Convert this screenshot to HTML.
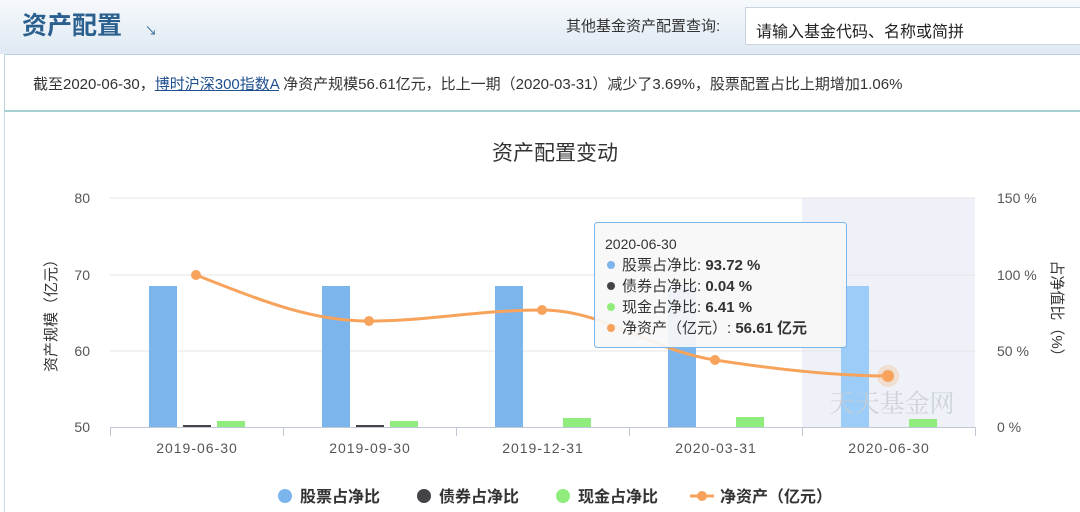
<!DOCTYPE html>
<html><head><meta charset="utf-8"><style>
body{margin:0;width:1080px;height:511px;overflow:hidden;background:#fff;font-family:"Liberation Sans","Noto Sans CJK SC",sans-serif;}
.hdr{position:absolute;left:0;top:0;width:1080px;height:54px;background:linear-gradient(#f6f9fc,#dfe9f3);}
.t{position:absolute;left:22px;top:6px;font-size:25px;font-weight:bold;color:#2a5f8e;}
.ar{position:absolute;left:145px;top:22px;font-size:12px;color:#2a5f8e;}
.q{position:absolute;left:566px;top:15px;font-size:15px;color:#333;}
.inp{position:absolute;left:745px;top:7px;width:340px;height:38px;background:#fff;border:1px solid #c9d3dd;box-sizing:border-box;font-size:16px;color:#222;padding:10px 0 0 10px;}
.info{position:absolute;left:4px;top:54px;width:1080px;height:58px;border:1px solid #bcd1e0;border-bottom:2px solid #a9d0d0;box-sizing:border-box;font-size:15px;color:#333;padding:18px 0 0 28px;}
.info a{color:#1f4f8f;text-decoration:underline;}
.side{position:absolute;left:4px;top:112px;width:1px;height:400px;background:#cdd8e2;}
</style></head><body>
<div class="hdr"></div>
<div class="t">资产配置</div><div class="ar">↘</div>
<div class="q">其他基金资产配置查询:</div>
<div class="inp">请输入基金代码、名称或简拼</div>
<div class="info">截至2020-06-30，<a>博时沪深300指数A</a> 净资产规模56.61亿元，比上一期（2020-03-31）减少了3.69%，股票配置占比上期增加1.06%</div>
<div class="side"></div>
<svg style="position:absolute;left:0;top:0" width="1080" height="511" font-family="Liberation Sans, Noto Sans CJK SC, sans-serif">
<rect x="802" y="198" width="173" height="229" fill="#eef2f8"/>
<text x="555" y="160" font-size="21" fill="#333" text-anchor="middle">资产配置变动</text>
<g stroke="#e4e4e4"><line x1="110" y1="198" x2="975" y2="198"/><line x1="110" y1="275" x2="975" y2="275"/><line x1="110" y1="351" x2="975" y2="351"/></g>
<line x1="110" y1="427.5" x2="975" y2="427.5" stroke="#c0c8d6"/>
<g stroke="#c0c8d6"><line x1="110.5" y1="427" x2="110.5" y2="436"/><line x1="283.5" y1="427" x2="283.5" y2="436"/><line x1="456.5" y1="427" x2="456.5" y2="436"/><line x1="629.5" y1="427" x2="629.5" y2="436"/><line x1="802.5" y1="427" x2="802.5" y2="436"/><line x1="975.5" y1="427" x2="975.5" y2="436"/></g>
<g font-size="14" fill="#555" text-anchor="end"><text x="90" y="203">80</text><text x="90" y="280">70</text><text x="90" y="356">60</text><text x="90" y="432">50</text></g>
<g font-size="14" fill="#555"><text x="997" y="203">150 %</text><text x="997" y="280">100 %</text><text x="997" y="356">50 %</text><text x="997" y="432">0 %</text></g>
<text transform="translate(56,312) rotate(-90)" font-size="15" fill="#333" text-anchor="middle">资产规模（亿元）</text>
<text transform="translate(1052,312) rotate(90)" font-size="15" fill="#333" text-anchor="middle">占净值比（%）</text>
<g font-size="14" fill="#555" text-anchor="middle" letter-spacing="1"><text x="197" y="453">2019-06-30</text><text x="370" y="453">2019-09-30</text><text x="543" y="453">2019-12-31</text><text x="716" y="453">2020-03-31</text><text x="889" y="453">2020-06-30</text></g>
<g fill="#7cb5ec"><rect x="149" y="286" width="28" height="141"/><rect x="322" y="286" width="28" height="141"/><rect x="495" y="286" width="28" height="141"/><rect x="668" y="286" width="28" height="141"/><rect x="841" y="286" width="28" height="141" fill="#9ccdf8"/></g>
<g fill="#434348"><rect x="183" y="425" width="28" height="2"/><rect x="356" y="425" width="28" height="2"/></g>
<g fill="#90ed7d"><rect x="217" y="421" width="28" height="6"/><rect x="390" y="421" width="28" height="6"/><rect x="563" y="418" width="28" height="9"/><rect x="736" y="417" width="28" height="10"/><rect x="909" y="419" width="28" height="8"/></g>
<path d="M196 275 C260 300,310 321,369 321 S480 310,542 310 S650 350,715 360 S840 376,888 376" fill="none" stroke="#f7a35c" stroke-width="3"/>
<g fill="#f7a35c"><circle cx="196" cy="275" r="5"/><circle cx="369" cy="321" r="5"/><circle cx="542" cy="310" r="5"/><circle cx="715" cy="360" r="5"/><circle cx="888" cy="376" r="11" opacity="0.25"/><circle cx="888" cy="376" r="6"/></g>
<text x="892" y="412" font-size="25" fill="#c8ccd2" text-anchor="middle" font-family="Noto Serif CJK SC, serif" opacity="0.8">天天基金网</text>
<rect x="594.5" y="222.5" width="252" height="125" rx="3" fill="#f7f7f7" fill-opacity="0.93" stroke="#7cb5ec"/>
<g font-size="15" fill="#333"><text x="605" y="249" font-size="14">2020-06-30</text>
<circle cx="611" cy="265" r="4" fill="#7cb5ec"/><text x="622" y="270">股票占净比: <tspan font-weight="bold">93.72 %</tspan></text>
<circle cx="611" cy="286" r="4" fill="#434348"/><text x="622" y="291">债券占净比: <tspan font-weight="bold">0.04 %</tspan></text>
<circle cx="611" cy="307" r="4" fill="#90ed7d"/><text x="622" y="312">现金占净比: <tspan font-weight="bold">6.41 %</tspan></text>
<circle cx="611" cy="328" r="4" fill="#f7a35c"/><text x="622" y="333">净资产（亿元）: <tspan font-weight="bold">56.61 亿元</tspan></text></g>
<g font-size="16" font-weight="bold" fill="#333">
<circle cx="285" cy="496" r="7" fill="#7cb5ec"/><text x="300" y="502">股票占净比</text>
<circle cx="424" cy="496" r="7" fill="#434348"/><text x="439" y="502">债券占净比</text>
<circle cx="563" cy="496" r="7" fill="#90ed7d"/><text x="578" y="502">现金占净比</text>
<line x1="690" y1="496" x2="714" y2="496" stroke="#f7a35c" stroke-width="3"/><circle cx="702" cy="496" r="5" fill="#f7a35c"/><text x="720" y="502">净资产（亿元）</text></g>
</svg>
</body></html>
